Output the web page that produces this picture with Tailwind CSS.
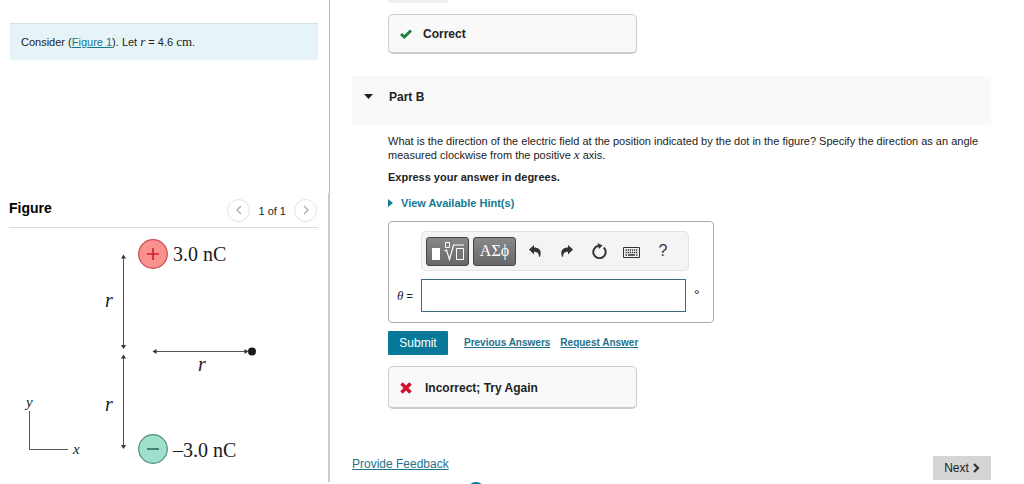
<!DOCTYPE html>
<html lang="en">
<head>
  <meta charset="UTF-8">
  <meta name="viewport" content="width=device-width, initial-scale=1.0">
  <title>Part B</title>
  <script src="https://cdn.jsdelivr.net/npm/@tailwindcss/browser@4"></script>
</head>
<body class="bg-white font-['Liberation_Sans',Arial,sans-serif] text-[11px] leading-[14px] text-[#222]">
  <div class="flex min-h-screen">

    <aside class="flex w-[330px] shrink-0 flex-col">
      <section class="h-[193px] border-r border-[#b5b8bd] pl-[10px] pr-[11px] pt-[23px]">
        <p class="border-t border-[#d3e3e8] bg-[#e6f4f7] px-[11px] py-[11px]">
          Consider (<a href="#figure" class="text-[#1a7794] underline">Figure 1</a>). Let <i class="font-['Liberation_Serif',serif] text-[13px]">r</i> = 4.6 <span class="font-['Liberation_Serif',serif] text-[13px]">cm</span>.
        </p>
      </section>
      <section id="figure" class="mb-[2px] grow border-r-2 border-[#c3cad8] pl-[9px] pr-[10px]">
        <header class="flex h-[35px] items-center justify-between border-b border-[#d5dce0] pr-px">
          <h2 class="pb-1 text-sm font-bold text-black">Figure</h2>
          <nav class="flex items-center gap-2">
            <button type="button" aria-label="Previous figure" class="flex size-[23px] items-center justify-center rounded-full border border-[#e2e2e2]">
              <svg class="size-[10px]" viewBox="0 0 10 10" fill="none" stroke="#aaa" stroke-width="1.3"><path d="M7 1 3 5l4 4"/></svg>
            </button>
            <span class="pt-[2px]">1 of 1</span>
            <button type="button" aria-label="Next figure" class="flex size-[23px] items-center justify-center rounded-full border border-[#e2e2e2]">
              <svg class="size-[10px]" viewBox="0 0 10 10" fill="none" stroke="#aaa" stroke-width="1.3"><path d="m3 1 4 4-4 4"/></svg>
            </button>
          </nav>
        </header>
        <svg class="block h-[250px] w-[300px] font-['Liberation_Serif',serif]" viewBox="9 228 300 250" fill="#1a1a1a">
          <!-- distance arrows -->
          <path d="M123.500 257V346M123.500 357V446M156 351.500H245" fill="none" stroke="#555"/>
          <path d="m123.500 254.500-2.500 4h5zM123.500 349l-2.500-4h5zM123.500 354.500l-2.500 4h5zM123.500 449l-2.500-4h5zM152.500 351.500l4-2.500v5zM248.500 351.500l-4-2.500v5z" fill="#333"/>
          <circle cx="252" cy="351.500" r="4"/>
          <!-- charges -->
          <circle cx="153" cy="254" r="14.300" fill="#fb918d" stroke="#c84a55" stroke-width="1.200"/>
          <path d="M147 254h12M153 248v12" stroke="#cc1f36" stroke-width="1.600"/>
          <circle cx="153" cy="449" r="14.300" fill="#9fe0cc" stroke="#568b80" stroke-width="1.200"/>
          <path d="M147 449h12" stroke="#2c6d60" stroke-width="1.600"/>
          <text x="173" y="261" font-size="20">3.0 nC</text>
          <text x="173" y="457" font-size="20">–3.0 nC</text>
          <g font-style="italic">
            <text x="105" y="307" font-size="20">r</text>
            <text x="105" y="411" font-size="20">r</text>
            <text x="198" y="371" font-size="20">r</text>
            <text x="26" y="407" font-size="15">y</text>
            <text x="73" y="454" font-size="15">x</text>
          </g>
          <path d="M29.500 411v38.500H68" fill="none" stroke="#555"/>
        </svg>
      </section>
    </aside>

    <main class="flex grow flex-col pl-[22px] pr-[33px]">
      <div class="ml-9 h-[3px] w-[60px] bg-[#f1f1f1]"></div>
      <div class="ml-9 mt-[11px] flex h-10 w-[249px] items-center gap-[11px] rounded-[5px] border border-b-2 border-[#ccc] bg-[#f9f9f9] px-[11px] text-xs font-bold">
        <svg class="h-[10px] w-3" viewBox="0 0 12 10" fill="none" stroke="#1d7f3f" stroke-width="3"><path d="m1 5 3.300 3L11 1.500"/></svg>
        Correct
      </div>

      <h2 class="mt-[22px] flex h-[49px] items-center bg-[#f9f9f9] pb-2 pl-3 text-xs font-bold">
        <svg class="mr-4 h-[5px] w-[9px]" viewBox="0 0 9 5" fill="#222"><path d="M0 0h9L4.500 5z"/></svg>
        Part B
      </h2>

      <form class="ml-9">
        <p class="mt-[9px]">What is the direction of the electric field at the position indicated by the dot in the figure? Specify the direction as an angle measured clockwise from the positive <i class="font-['Liberation_Serif',serif] text-[13px]">x</i> axis.</p>
        <p class="mt-2 font-bold">Express your answer in degrees.</p>
        <button type="button" class="mt-3 flex items-center gap-2 font-bold text-[#147a94]">
          <svg class="h-2 w-[5px]" viewBox="0 0 5 8" fill="#147a94"><path d="M0 0v8l5-4z"/></svg>
          View Available Hint(s)
        </button>

        <div class="mt-[11px] w-[326px] rounded-[4px] border border-[#a9a9a9] pb-[10px] pt-[9px]">
          <div class="ml-8 flex h-10 w-[268px] items-center rounded-[5px] border border-[#e2e2e2] bg-[#f4f4f4] pl-1 text-[#333]">
            <button type="button" aria-label="Templates" class="flex h-[29px] w-[43px] items-center justify-center rounded-[3px] border border-[#444] bg-linear-to-b from-[#88888b] to-[#68686b]">
              <svg class="h-5 w-8" viewBox="0 0 32 20" fill="none" stroke="#fff">
                <path d="M0 7h8v12H0z" fill="#fff" stroke="none"/>
                <path d="M13.500 1.500h4v5h-4zM24.500 7.500h7v11h-7z"/>
                <path d="m12.500 10 2-1 3 9.500 4-14.500H32" stroke-width="1.200"/>
              </svg>
            </button>
            <button type="button" aria-label="Symbols" class="ml-1 h-[29px] w-[43px] rounded-[3px] border border-[#444] bg-linear-to-b from-[#88888b] to-[#68686b] font-['Liberation_Serif',serif] text-base text-white">ΑΣϕ</button>
            <div class="ml-[3px] flex items-center">
              <button type="button" aria-label="Undo" class="flex w-8 justify-center">
                <svg class="h-3 w-3" viewBox="0 0 12 12" fill="#333"><path d="M0 4.500 5 0v2.500c5.500 0 8 3.500 6 9l-1 .5C10 8.500 8.500 6.800 5 6.800V9.500z"/></svg>
              </button>
              <button type="button" aria-label="Redo" class="flex w-8 justify-center">
                <svg class="h-3 w-3" viewBox="0 0 12 12" fill="#333"><path d="M12 4.500 7 0v2.500c-5.500 0-8 3.500-6 9l1 .5C2 8.500 3.500 6.800 7 6.800V9.500z"/></svg>
              </button>
              <button type="button" aria-label="Reset" class="flex w-8 justify-center">
                <svg class="size-4" viewBox="0 0 16 16" fill="none" stroke="#333" stroke-width="2"><path d="M12.800 4.500a6.200 6.200 0 1 1-5-1.700"/><path d="M6.500 0 11.500 2.500 8 6z" fill="#333" stroke="none"/></svg>
              </button>
              <button type="button" aria-label="Keyboard shortcuts" class="flex w-8 justify-center pt-[2px]">
                <svg class="h-[11px] w-[17px]" viewBox="0 0 17 11" fill="none" stroke="#333"><path d="M.5.5h16v10H.5z"/><path d="M2.500 3h12M2.500 5.500h12" stroke-width="1.300" stroke-dasharray="1.300 .8"/><path d="M2.500 8h1.500M5 8h7M13 8h1.500" stroke-width="1.300"/></svg>
              </button>
              <button type="button" aria-label="Help" class="w-8 text-base">?</button>
            </div>
          </div>
          <div class="mt-2 flex items-center">
            <label for="theta" class="w-8 pl-2"><i class="font-['Liberation_Serif',serif] text-[13px]">θ</i> =</label>
            <input id="theta" type="text" class="h-[33px] w-[265px] border border-[#3d6b7c] bg-white px-2 text-sm outline-none">
            <span class="pb-[2px] pl-2 text-sm">°</span>
          </div>
        </div>

        <div class="mt-2 flex items-center">
          <button type="submit" class="h-6 w-[60px] rounded-[1px] bg-[#087898] text-xs text-white">Submit</button>
          <a href="#previous" class="ml-4 text-[10px] font-bold text-[#1f718c] underline">Previous Answers</a>
          <a href="#request" class="ml-[10px] text-[10px] font-bold text-[#1f718c] underline">Request Answer</a>
        </div>
      </form>

      <div class="ml-9 mt-[11px] flex h-[43px] w-[249px] items-center gap-[13px] rounded-[5px] border border-b-2 border-[#ccc] bg-[#f9f9f9] px-[11px] pt-[2px] text-xs font-bold">
        <svg class="size-3" viewBox="0 0 12 12" fill="none" stroke="#cf1030" stroke-width="3.500"><path d="m1.500 1.500 9 9M10.500 1.500l-9 9"/></svg>
        Incorrect; Try Again
      </div>

      <footer class="mt-[47px]">
        <div class="flex items-start justify-between">
          <a href="#feedback" class="text-xs text-[#1f718c] underline">Provide Feedback</a>
          <button type="button" class="flex h-6 w-[58px] items-center justify-center gap-1 bg-[#d5d5d5] text-xs">
            Next
            <svg class="h-[10px] w-[7px]" viewBox="0 0 7 10" fill="none" stroke="#333" stroke-width="2.200"><path d="m1 1 4 4-4 4"/></svg>
          </button>
        </div>
        <svg class="ml-[118px] mt-[2px] block h-[2px] w-3" viewBox="0 0 12 2" fill="#087898"><circle cx="6" cy="9" r="9"/></svg>
      </footer>
    </main>
  </div>
</body>
</html>
